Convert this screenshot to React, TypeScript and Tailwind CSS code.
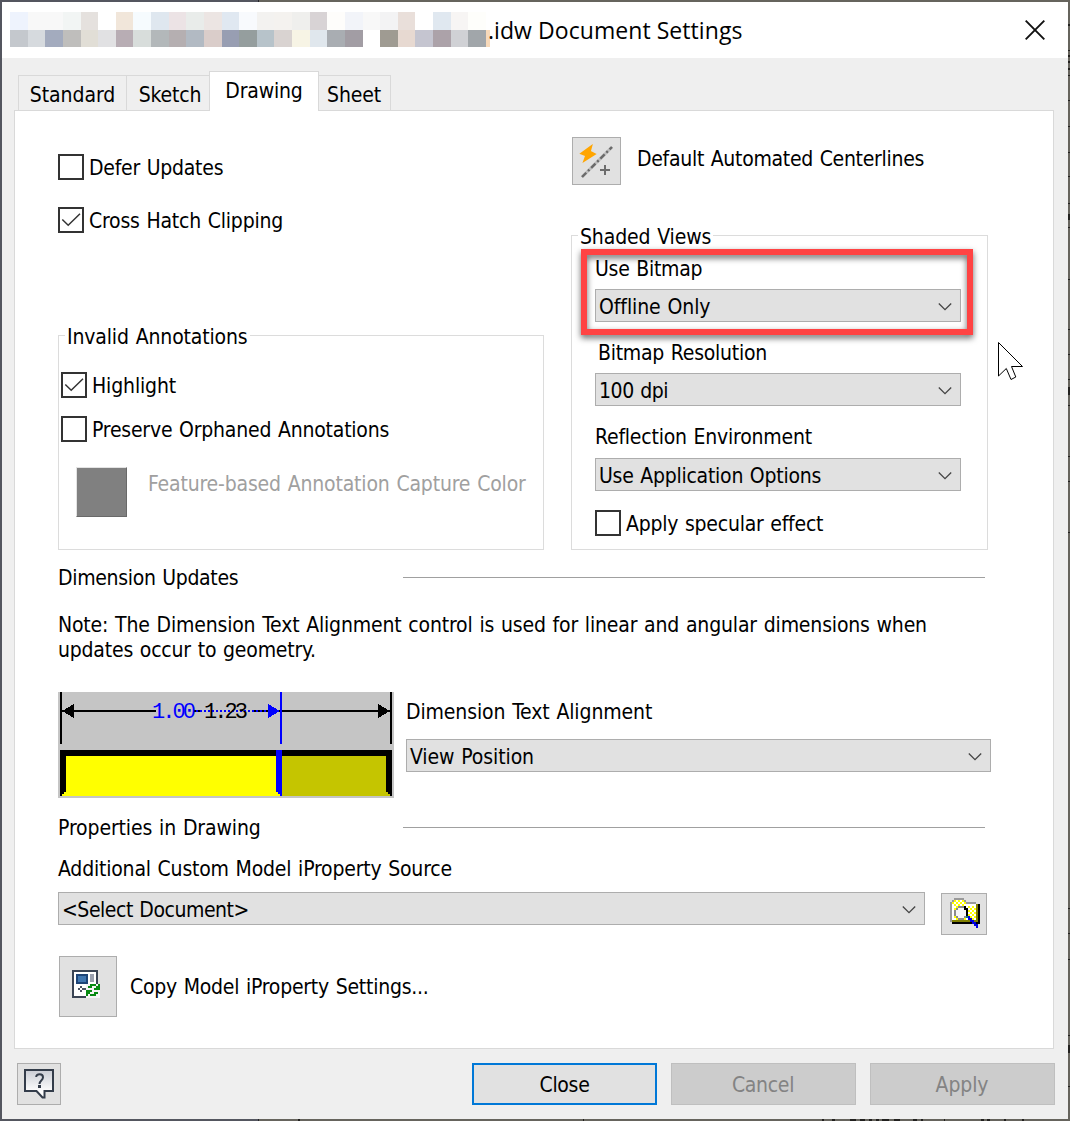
import type { ReactNode } from "react";
import clsx from "clsx";

const TITLE_MOSAIC = [
  ["#eef3fd", "#f8f8f8", "#f8f8f8", "#f2f5f4", "#e5e1de", "#ffffff", "#f1e6da", "#f6fbfe", "#dfe7ef", "#ece3e5", "#e9ecea", "#ece5e3", "#e0e8f1", "#f8fafd", "#f3f2f0", "#f4f2ef", "#efefed", "#d8d3d5", "#fefdfb", "#f2f4f9", "#f8f8f8", "#f3f3f4", "#e9dfda", "#ffffff", "#e0e8f0", "#f7f5f4", "#fefefb"],
  ["#c4c8cd", "#d6dade", "#a3abbe", "#bfbebc", "#e1ded6", "#e1e1e3", "#b8adb4", "#d8dddb", "#b3b8ba", "#b5afb1", "#b2bac3", "#dacdca", "#989eb2", "#959e9e", "#b7c3ca", "#d9d3d1", "#f7f4e5", "#e0e7ed", "#a9adb2", "#a29da4", "#ffffff", "#9f9b92", "#e7d9d1", "#c5c5d0", "#aca2a9", "#d0d1d5", "#a1a6aa"],
];

// [offset, length] of the dark marks that show past the dialog's edges
const RIGHT_MARKS = [
  [24, 2], [50, 1], [55, 2], [61, 2], [68, 2], [75, 1], [100, 1], [126, 1], [152, 1],
  [176, 1], [203, 1], [214, 6], [227, 1], [279, 1], [329, 1], [354, 1], [379, 1],
  [387, 8], [405, 1], [456, 1], [481, 1], [532, 1], [908, 1], [933, 1], [959, 1],
  [1035, 1], [1045, 8], [1086, 1],
];
const BOTTOM_MARKS = [
  [298, 2], [583, 1], [822, 2], [832, 3], [850, 6], [860, 5], [869, 3], [876, 3],
  [882, 7], [894, 6], [913, 4], [921, 2], [944, 1], [981, 3], [987, 3], [1004, 2], [1022, 2],
];

function Checkbox({
  label,
  checked,
  className,
}: {
  label: string;
  checked?: boolean;
  className?: string;
}) {
  return (
    <label className={clsx("flex h-[26px] items-center gap-[5px]", className)}>
      <span className="flex h-[26px] w-[26px] shrink-0 items-center justify-center border-2 border-[#333333] bg-white">
        {checked && (
          <svg width="22" height="22" viewBox="0 0 22 22" fill="none">
            <path d="M2.3 10.5L8.2 16.2L20 4.8" stroke="#333333" strokeWidth="1.5" />
          </svg>
        )}
      </span>
      <span className="pt-0.5">{label}</span>
    </label>
  );
}

function Select({ value, className }: { value: string; className?: string }) {
  return (
    <div
      className={clsx(
        "flex h-[33px] items-center justify-between border border-[#adadad] bg-[#e1e1e1] pl-[3px] pr-[7px]",
        className
      )}
    >
      <span className="pt-0.5">{value}</span>
      <svg width="16" height="10" viewBox="0 0 16 10" fill="none" className="mt-0.5">
        <path d="M1.8 1.5L8 7.7L14.2 1.5" stroke="#444444" strokeWidth="1.3" />
      </svg>
    </div>
  );
}

function Group({
  title,
  titleClass,
  className,
  children,
}: {
  title: string;
  titleClass?: string;
  className?: string;
  children: ReactNode;
}) {
  return (
    <section className={clsx("relative border border-[#dcdcdc]", className)}>
      <h2 className={clsx("absolute -top-[13px] bg-white pr-0.5 leading-7", titleClass)}>
        {title}
      </h2>
      {children}
    </section>
  );
}

function SectionTitle({ children, className }: { children: ReactNode; className?: string }) {
  return (
    <div className="flex h-7 items-center">
      <h2 className={clsx("w-[345px] pt-0.5", className)}>{children}</h2>
      <div className="h-px w-[582px] bg-[#a0a0a0]" />
    </div>
  );
}

function IconButton({ className, children }: { className?: string; children: ReactNode }) {
  return (
    <button
      className={clsx(
        "flex shrink-0 items-center justify-center border border-[#adadad] bg-[#e1e1e1]",
        className
      )}
    >
      {children}
    </button>
  );
}

function CenterlineIcon() {
  return (
    <svg width="47" height="46" viewBox="0 0 47 46">
      <path d="M18.5 8L8 15.5L13 17.5L11 23L22 16L17 13.5Z" fill="#ffa500" stroke="#ffa500" strokeWidth="1.6" />
      <path d="M9 39L39 9" stroke="#bdbdbd" strokeWidth="3" />
      <path
        d="M9 39L39 9"
        stroke="#6a6a6a"
        strokeWidth="2.4"
        strokeDasharray="6 2.5 2 2.5"
      />
      <path d="M27 32H37M32 27V37" stroke="#6c6c6c" strokeWidth="2" />
    </svg>
  );
}

function DimensionPreview() {
  return (
    <svg
      width="336"
      height="106"
      viewBox="0 0 168 53"
      shapeRendering="crispEdges"
      className="shrink-0"
    >
      <rect width="168" height="53" fill="#c5c5c5" />
      <path d="M1 0h1v26h-1zM166 0h1v26h-1zM2 9h47v1h-47zM68 9h3v1h-3zM98 9h68v1h-68z" fill="#000" />
      <path d="M2 9.5L8 6V13ZM166 9.5L160 6V13Z" fill="#000" />
      <path d="M69 9.5H105" stroke="#0000ff" strokeDasharray="1 1" />
      <path d="M111 0h1v26h-1zM111 9.5L105 6V13Z" fill="#0000ff" />
      <g className="font-['Liberation_Mono'] [word-spacing:0]" fontSize="11">
        <text x="47" y="13" textLength="22" fill="#0000ff">
          1.00
        </text>
        <text x="73" y="13" textLength="22" fill="#000">
          1.23
        </text>
      </g>
      <rect x="1" y="29" width="166" height="23" fill="#000" />
      <path d="M4 32h105v18h1v1h1v1h-109v-1h1v-1h1z" fill="#ffff00" />
      <path d="M112 32h52v18h1v1h1v1h-54z" fill="#c5c500" />
      <path d="M109 29h3v23h-1v-1h-1v-1h-1z" fill="#0000ff" />
    </svg>
  );
}

function FolderSearchIcon() {
  return (
    <svg width="30" height="30" viewBox="0 0 15 15" shapeRendering="crispEdges">
      <defs>
        <pattern id="dither" width="2" height="2" patternUnits="userSpaceOnUse">
          <rect width="2" height="2" fill="#ffff00" />
          <path d="M0 0h1v1h-1zM1 1h1v1h-1z" fill="#ffffff" />
        </pattern>
      </defs>
      <path d="M1 12h13v1h-13zM14 3h1v10h-1z" fill="#000" />
      <path d="M0 2h1v-1h1v-1h5v1h1v1h5v10h-13z" fill="#9a9a9a" />
      <path d="M1 2h1v-1h5v1h1v1h5v8h-12z" fill="url(#dither)" />
      <path d="M1 11h13v1h-13zM13 3h1v9h-1z" fill="#808000" />
      <path d="M1 3h1v8h-1zM8 3h5v1h-5z" fill="#fff" />
      <path d="M4 4h3v1h1v1h1v3h-1v1h-1v1h-3v-1h-1v-1h-1v-3h1v-1h1z" fill="#8c8c8c" />
      <path d="M4 5h3v1h1v3h-1v1h-3v-1h-1v-3h1z" fill="#f6f6f6" />
      <path d="M7 4h1v1h1v4h-1v-3h-1z" fill="#000" />
      <path d="M8 9h1v1h1v1h-1v-1h-1z" fill="#008080" />
      <path d="M9 9h1v1h1v1h1v1h1v1h1v2h-1v-1h-1v-1h-1v-1h-1v-1h-1z" fill="#0000e0" />
    </svg>
  );
}

function CopySettingsIcon() {
  return (
    <svg width="29" height="29" viewBox="0 0 29 29" shapeRendering="crispEdges">
      <rect x="1" y="1" width="24" height="26" fill="#fff" stroke="#3a4454" strokeWidth="2" />
      <rect x="4" y="4" width="12" height="10" fill="#1d4477" />
      <rect x="6" y="6" width="8" height="6" fill="#3f76b0" />
      <rect x="18" y="4" width="4" height="8" fill="#9aa0ae" />
      <path d="M8 16h2v2h-2zM6 18h2v2h-2zM10 18h4v2h-4zM8 20h2v2h-2z" fill="#4d5563" />
      <path d="M14 14h14v14h-14z" fill="#f4f4f4" />
      <path
        d="M18 14h6v2h-6zM26 14h2v6h-6v-2h2v-2h2zM16 16h4v2h-4zM14 20h6v2h-2v2h-2v2h-2zM22 22h4v2h-4zM18 24h6v2h-6z"
        fill="#078a12"
      />
    </svg>
  );
}

function HelpIcon() {
  return (
    <svg width="30" height="30" viewBox="0 0 30 30">
      <defs>
        <linearGradient id="bubble" x1="0" y1="0" x2="0" y2="1">
          <stop offset="0" stopColor="#c9ccd4" />
          <stop offset="0.8" stopColor="#ffffff" />
        </linearGradient>
      </defs>
      <path
        d="M1 1H29V22H20.5V28.5H18.5L12.5 22H1Z"
        fill="url(#bubble)"
        stroke="#333c4a"
        strokeWidth="2"
      />
      <path
        d="M12.2 8C12.2 4.3 19 4.2 19 8.3C19 11.5 15.5 11.5 15.5 15"
        fill="none"
        stroke="#333c4a"
        strokeWidth="2"
      />
      <rect x="14" y="16" width="3" height="3" fill="#333c4a" />
    </svg>
  );
}

export default function App() {
  return (
    <div className="relative flex h-[1121px] w-[1070px] flex-col overflow-hidden whitespace-nowrap bg-[#66645d] pt-0.5 font-['DejaVu_Sans_Condensed','DejaVu_Sans',sans-serif] text-[21px] leading-7 text-black [word-spacing:1px]">
      {/* Slivers of the application behind the dialog */}
      <div className="absolute left-0 top-0 h-full w-[259px] border-r border-[#25262b] bg-[#54565f]" />
      {RIGHT_MARKS.map(([top, height]) => (
        <div key={top} className="absolute right-0 w-0.5 bg-[#22211f]" style={{ top, height }} />
      ))}
      {BOTTOM_MARKS.map(([left, width]) => (
        <div key={left} className="absolute bottom-0 h-0.5 bg-[#22211f]" style={{ left, width }} />
      ))}

      <div className="relative ml-0.5 flex h-[1117px] w-[1066px] flex-col bg-[#efefef]">
        <header className="flex h-14 shrink-0 items-center bg-white pl-2">
          <div className="-mt-[1px] flex h-[35px] w-[480px] shrink-0">
            <div className="w-[476px]">
              {TITLE_MOSAIC.map((row, i) => (
                <div key={i} className={clsx("flex", i === 0 ? "h-[18px]" : "h-[17px]")}>
                  {row.map((color, j) => (
                    <span key={j} className="flex-1" style={{ background: color }} />
                  ))}
                </div>
              ))}
            </div>
            <div className="mt-[18px] h-[17px] w-1 bg-[#f7d9ba]" />
          </div>
          <h1 className="-ml-[2px] font-['Open_Sans',sans-serif] text-[23px] tracking-[0.06px] [word-spacing:0]">
            .idw Document Settings
          </h1>
          <svg width="20" height="20" viewBox="0 0 20 20" className="-mt-px ml-auto mr-[23px]">
            <path d="M0.7 0.7L19.3 19.3M19.3 0.7L0.7 19.3" stroke="#111" strokeWidth="1.9" />
          </svg>
        </header>

        <nav className="flex h-[52px] shrink-0 items-end pl-4">
          <button className="h-[35px] w-[108px] border-l border-t border-[#d9d9d9] pt-[3px] tracking-[-0.07px]">
            Standard
          </button>
          <button className="h-[35px] w-[83px] border-l border-t border-[#d9d9d9] pl-1 pt-[3px] tracking-[-0.15px]">
            Sketch
          </button>
          <button className="relative z-10 -mb-px h-10 w-[110px] border border-b-0 border-[#d9d9d9] bg-white pb-0.5 tracking-[-0.16px]">
            Drawing
          </button>
          <button className="h-[35px] w-[72px] border-r border-t border-[#d9d9d9] pr-px pt-[3px] tracking-[-0.15px]">
            Sheet
          </button>
        </nav>

        <main className="ml-3 h-[939px] w-[1040px] shrink-0 border border-[#d9d9d9] bg-white pl-[43px]">
          <div className="flex h-[439px]">
            <div className="w-[486px] pt-[43px]">
              <Checkbox label="Defer Updates" className="tracking-[-0.25px]" />
              <Checkbox label="Cross Hatch Clipping" checked className="mt-[27px] tracking-[-0.21px]" />
              <Group
                title="Invalid Annotations"
                titleClass="left-[6px] pl-0.5 tracking-[-0.14px]"
                className="mt-[102px] h-[215px] pl-0.5 pt-9"
              >
                <Checkbox label="Highlight" checked className="tracking-[-0.14px]" />
                <Checkbox label="Preserve Orphaned Annotations" className="mt-[18px] tracking-[-0.21px]" />
                <div className="ml-[15px] mt-[25px] flex">
                  <div className="h-[50px] w-[51px] border border-b-[#696969] border-l-[#e3e3e3] border-r-[#696969] border-t-[#e3e3e3] bg-[#808080]" />
                  <span className="ml-[21px] mt-[3px] tracking-[-0.17px] text-[#a0a0a0]">
                    Feature-based Annotation Capture Color
                  </span>
                </div>
              </Group>
            </div>

            <div className="ml-[27px] w-[417px] pt-[26px]">
              <div className="ml-px flex h-12">
                <IconButton className="h-12 w-[49px]">
                  <CenterlineIcon />
                </IconButton>
                <span className="ml-4 mt-2 tracking-[-0.29px]">Default Automated Centerlines</span>
              </div>
              <Group
                title="Shaded Views"
                titleClass="left-[6px] pl-0.5 tracking-[-0.13px]"
                className="mt-[50px] h-[315px] pl-[23px] pt-[19px]"
              >
                <p className="mb-1.5 h-7 tracking-[-0.27px]">Use Bitmap</p>
                <Select value="Offline Only" className="w-[366px] tracking-[-0.09px]" />
                <p className="mb-1.5 ml-[3px] mt-[17px] h-7 tracking-[-0.25px]">Bitmap Resolution</p>
                <Select value="100 dpi" className="w-[366px] tracking-[-0.45px]" />
                <p className="mb-[7px] mt-[17px] h-7 tracking-[-0.21px]">Reflection Environment</p>
                <Select value="Use Application Options" className="w-[366px] tracking-[-0.25px]" />
                <Checkbox label="Apply specular effect" className="mt-[19px] tracking-[-0.23px]" />
                <div className="absolute left-[9px] top-[13px] h-[86px] w-[392px] border-[6px] border-[#ff4343] drop-shadow-[0_3px_3px_rgba(0,0,0,0.6)]" />
              </Group>
            </div>
          </div>

          <div className="mt-[13px]">
            <SectionTitle className="tracking-[-0.32px]">Dimension Updates</SectionTitle>
          </div>
          <p className="mt-[22px] leading-[25px] tracking-[-0.17px]">
            Note: The Dimension Text Alignment control is used for linear and angular dimensions when
            <br />
            <span className="tracking-[-0.2px]">updates occur to geometry.</span>
          </p>

          <div className="mt-[29px] flex h-[106px] gap-3">
            <DimensionPreview />
            <div className="w-[585px] pt-1.5">
              <p className="mb-[13px] h-7 tracking-[-0.12px]">Dimension Text Alignment</p>
              <Select value="View Position" className="tracking-[-0.1px]" />
            </div>
          </div>

          <div className="mt-[15px]">
            <SectionTitle className="tracking-[-0.12px]">Properties in Drawing</SectionTitle>
          </div>
          <p className="mt-[14px] h-7 tracking-[-0.2px]">Additional Custom Model iProperty Source</p>
          <div className="mt-[9px] flex items-start gap-4">
            <Select value="<Select Document>" className="w-[867px] tracking-[-0.47px]" />
            <IconButton className="mt-px h-[42px] w-[46px] pb-0.5 pl-px">
              <FolderSearchIcon />
            </IconButton>
          </div>
          <div className="ml-px mt-[21px] flex items-center gap-[13px]">
            <IconButton className="h-[61px] w-[58px] pb-1 pr-1">
              <CopySettingsIcon />
            </IconButton>
            <span className="tracking-[-0.24px]">Copy Model iProperty Settings...</span>
          </div>
        </main>

        <footer className="mt-3.5 flex h-[42px] shrink-0 pl-[15px]">
          <IconButton className="mr-auto w-11">
            <HelpIcon />
          </IconButton>
          <div className="mr-[13px] flex gap-3.5">
            <button className="w-[185px] border-2 border-[#0078d7] bg-[#e1e1e1] pt-0.5 tracking-[-0.3px]">
              Close
            </button>
            <button className="w-[185px] border border-[#bfbfbf] bg-[#cccccc] pr-px pt-0.5 tracking-[-0.3px] text-[#838383]">
              Cancel
            </button>
            <button className="w-[185px] border border-[#bfbfbf] bg-[#cccccc] pr-px pt-0.5 tracking-[-0.1px] text-[#838383]">
              Apply
            </button>
          </div>
        </footer>
      </div>

      {/* Mouse pointer */}
      <svg width="27" height="40" viewBox="0 0 27 40" className="absolute left-[998px] top-[342px]">
        <path
          d="M0.5 0.5L24.5 24.5H13.5L17.8 35L13 37.5L8.3 26.5L0.5 34Z"
          fill="#fff"
          stroke="#000"
          strokeWidth="1"
        />
      </svg>
    </div>
  );
}
